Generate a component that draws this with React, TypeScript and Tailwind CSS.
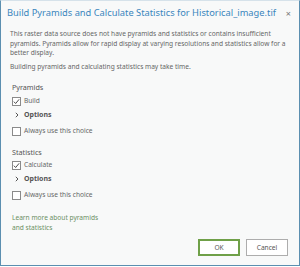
import React from "react";

const font = { fontFamily: '"Noto Sans", "Open Sans", sans-serif' };

function Check({ checked, label }: { checked?: boolean; label: string }) {
  return (
    <div className="flex items-center gap-[3px] h-[12px]">
      <span className="w-[9px] h-[9px] border border-[#8a8a8a] bg-white flex items-center justify-center">
        {checked && (
          <svg width={7} height={7} viewBox="0 0 8 8" fill="none" stroke="#444" strokeWidth={1.1}>
            <path d="M1 4.2 3 6.3 7 1.5" />
          </svg>
        )}
      </span>
      <span className="text-[6.6px] text-[#666]">{label}</span>
    </div>
  );
}

function Options() {
  return (
    <div className="flex items-center gap-[5px] h-[12px] pl-[3px]">
      <svg width={4} height={6} viewBox="0 0 4 6" fill="none" stroke="#555" strokeWidth={1}>
        <path d="M0.8 0.8 3 3 0.8 5.2" />
      </svg>
      <span className="text-[7px] font-bold text-[#555]">Options</span>
    </div>
  );
}

export default function App() {
  return (
    <div className="w-[300px] h-[267px] bg-white" style={font}>
      <div className="h-[266px] flex flex-col border border-[#5b8fb0] border-t-[#d6e2ea] bg-[#f8f9f9]">
        <div className="flex items-center justify-between h-[24px] pl-[6px] pr-[8px]">
          <h1 className="text-[9.3px] text-[#3a86bd] leading-none">
            Build Pyramids and Calculate Statistics for Historical_image.tif
          </h1>
          <span className="text-[9px] text-[#777] leading-none">×</span>
        </div>
        <div className="px-[9px] pt-[4px] text-[6.6px] leading-[9.5px] text-[#666]">
          <p>
            This raster data source does not have pyramids and statistics or contains insufficient pyramids.
            Pyramids allow for rapid display at varying resolutions and statistics allow for a better display.
          </p>
          <p className="mt-[4px]">Building pyramids and calculating statistics may take time.</p>
        </div>
        <div className="px-[11px] pt-[11px] flex flex-col">
          <div className="text-[7.2px] text-[#555] h-[12px]">Pyramids</div>
          <div className="mt-[1px] flex flex-col gap-[2px]">
            <Check checked label="Build" />
            <Options />
            <div className="mt-[2px]">
              <Check label="Always use this choice" />
            </div>
          </div>
          <div className="text-[7.2px] text-[#555] h-[12px] mt-[10px]">Statistics</div>
          <div className="flex flex-col gap-[2px]">
            <Check checked label="Calculate" />
            <Options />
            <div className="mt-[2px]">
              <Check label="Always use this choice" />
            </div>
          </div>
          <div className="mt-[12px] text-[6.6px] leading-[9.5px] text-[#6b8f63]">
            Learn more about pyramids
            <br />
            and statistics
          </div>
        </div>
        <div className="mt-auto flex justify-end gap-[6px] pr-[11px] pb-[9px]">
          <button className="w-[42px] h-[17px] border-2 border-[#6fa048] bg-white text-[6.6px] text-[#555]">
            OK
          </button>
          <button className="w-[42px] h-[17px] border border-[#adadad] bg-white text-[6.6px] text-[#555]">
            Cancel
          </button>
        </div>
      </div>
    </div>
  );
}
